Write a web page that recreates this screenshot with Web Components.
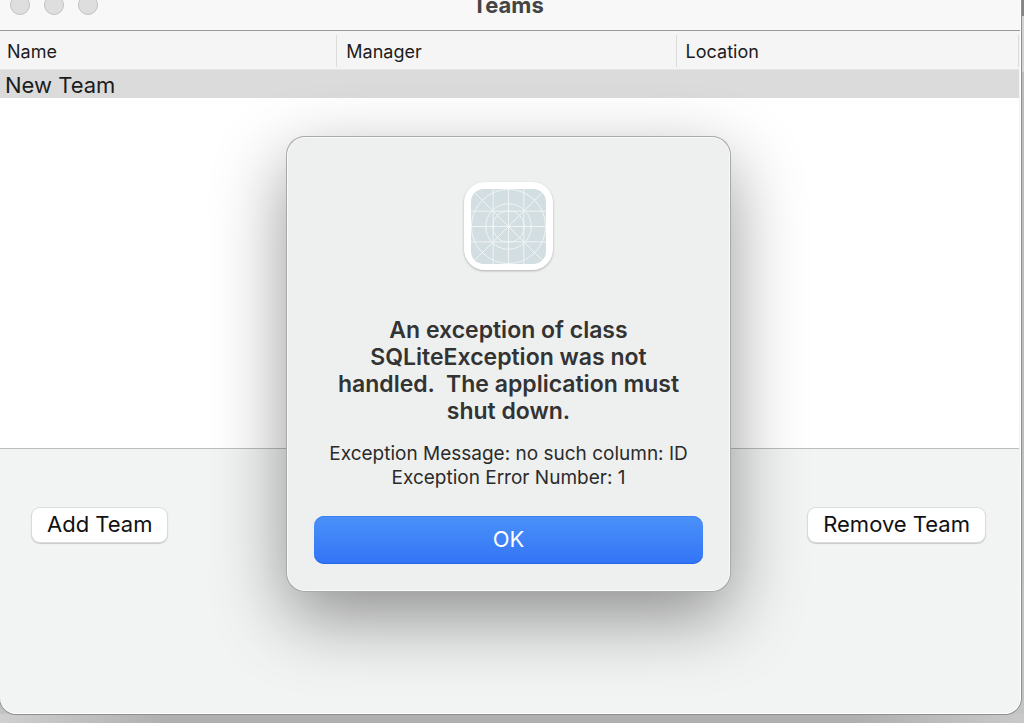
<!DOCTYPE html>
<html lang="en">
<head>
<meta charset="utf-8">
<title>Teams</title>
<style>
html, body { margin: 0; height: 100%; }
body { font-family: Inter, "Liberation Sans", sans-serif; color: #1c1c1c; overflow: hidden; }
</style>
</head>
<body>
<teams-desktop>
  <app-window heading="Teams">
    <team-table></team-table>
    <push-button slot="actions">Add Team</push-button>
    <push-button slot="actions">Remove Team</push-button>
    <alert-dialog slot="dialog">
      <app-icon slot="icon"></app-icon>
      <span slot="title">An exception of class
SQLiteException was not
handled.  The application must
shut down.</span>
      <span slot="message">Exception Message: no such column: ID
Exception Error Number: 1</span>
      <push-button slot="action" variant="primary">OK</push-button>
    </alert-dialog>
  </app-window>
</teams-desktop>
<script>
class BaseElement extends HTMLElement {
  constructor() {
    super();
    this.attachShadow({ mode: "open" }).innerHTML = this.constructor.markup;
  }
}

customElements.define("teams-desktop", class extends BaseElement {
  static markup = `
    <style>
      :host { display: block; box-sizing: border-box; height: 100vh; padding: 0 3px 9px 0;
        background: linear-gradient(90deg, #cfcfcf, #b1b0b0 16%, #b1b0b0 84%, #c9c9c9) bottom / 100% 9px no-repeat,
          linear-gradient(#858585 0 16px, #d2d2d2 16px 72px, #bcbcbc 72px 300px, #c4c4c4); }
    </style>
    <slot></slot>`;
});

customElements.define("app-window", class extends BaseElement {
  static markup = `
    <style>
      :host { display: flex; flex-direction: column; position: relative; box-sizing: border-box; height: 100%;
        background: #f2f4f3; border-right: 1px solid #fff; border-bottom: 1px solid #fff;
        border-radius: 0 0 16px 16px; box-shadow: 0 0 0 1px #8e8e8e; }
      header { height: 30px; display: flex; flex-direction: column; justify-content: flex-end;
        overflow: hidden; background: #f8f8f8; border-bottom: 1px solid #999; }
      .bar { flex: none; height: 50px; display: grid; grid-template-columns: 1fr auto 1fr; align-items: center; padding: 0 14px 0 10px; }
      .lights { display: flex; gap: 14px; }
      .lights i { box-sizing: border-box; width: 20px; height: 20px; border-radius: 50%; background: #dedede; border: 1px solid #c2c2c2; }
      h1 { margin: 0; font-size: 22px; line-height: 28px; font-weight: 700; color: #444; }
      .actions { display: flex; justify-content: space-between; padding: 59px 35px 0 32px; }
      .overlay { position: absolute; top: 137px; left: 0; right: 3px; display: flex; justify-content: center; }
    </style>
    <header><div class="bar"><div class="lights"><i></i><i></i><i></i></div><h1></h1></div></header>
    <slot></slot>
    <div class="actions"><slot name="actions"></slot></div>
    <div class="overlay"><slot name="dialog"></slot></div>`;
  connectedCallback() {
    this.shadowRoot.querySelector("h1").textContent = this.getAttribute("heading");
  }
});

customElements.define("team-table", class extends BaseElement {
  static markup = `
    <style>
      :host { display: block; height: 417px; margin-right: 1px; background: #fff; border-bottom: 1px solid #bcbcbc; }
      table { width: 100%; table-layout: fixed; border-collapse: collapse; }
      thead { background: #f5f5f5; }
      th { height: 38px; padding: 0; text-align: left; font-weight: 400; font-size: 18px; line-height: 24px; color: #1c1c1c; border-bottom: 1px solid #e6e6e6; }
      th:nth-child(1) { width: 33.1%; }
      th:nth-child(2) { width: 33.3%; }
      th span { display: block; margin: 4px 0 2px; padding: 5px 8px 3px 7px; border-right: 1px solid #dcdcdc; }
      th + th span { padding-left: 9px; }
      td { height: 26px; padding: 2px 5px 0; font-size: 22px; line-height: 26px; background: #dbdbdb; }
    </style>
    <table>
      <thead><tr><th scope="col"><span>Name</span></th><th scope="col"><span>Manager</span></th><th scope="col"><span>Location</span></th></tr></thead>
      <tbody><tr><td>New Team</td><td></td><td></td></tr></tbody>
    </table>`;
});

customElements.define("push-button", class extends BaseElement {
  static markup = `
    <style>
      :host { display: block; }
      button { display: block; width: 100%; height: 34px; margin: 0; padding: 0 15px 2px; border: 0; border-radius: 8px;
        background: #fff; color: #111; font: inherit; font-size: 22px; line-height: 32px;
        box-shadow: 0 0 0 1px #dadcdb, 0 1px 1px 1px #c8cac9; }
      :host([variant="primary"]) button { height: 48px; line-height: 46px; border-radius: 10px; color: #fff;
        background: linear-gradient(#4b91f8, #3274f6);
        box-shadow: inset 0 1px #3d80f0, inset 0 -1px #2466ec; }
    </style>
    <button type="button"><slot></slot></button>`;
});

customElements.define("app-icon", class extends BaseElement {
  static markup = `
    <style>
      :host { display: block; width: 89px; height: 89px; }
      svg { display: block; overflow: visible; filter: drop-shadow(0 1px 1px #0004); }
    </style>
    <svg width="89" height="89" viewBox="0 0 90 90" aria-hidden="true">
      <defs><clipPath id="face"><rect x="7" y="7" width="76" height="76" rx="13"/></clipPath></defs>
      <rect width="90" height="89" rx="21" fill="#fff"/>
      <g clip-path="url(#face)">
        <rect x="7" y="7" width="76" height="76" fill="#d3dee2"/>
        <g fill="none" stroke="#f0f4f5" stroke-width="1">
          <path d="M7 7 83 83M83 7 7 83M45 7v76M29.500 7v76M60.500 7v76M7 45h76M7 29.500h76M7 60.500h76"/>
          <circle cx="45" cy="45" r="37.500"/><circle cx="45" cy="45" r="23"/><circle cx="45" cy="45" r="16"/>
        </g>
      </g>
    </svg>`;
});

customElements.define("alert-dialog", class extends BaseElement {
  static markup = `
    <style>
      :host { display: block; width: 443px; }
      section { box-sizing: border-box; display: flex; flex-direction: column; align-items: center;
        padding: 44px 26px 26px; background: #eef0ef; border: 1px solid #fafafa; border-radius: 18px; text-align: center;
        box-shadow: 0 0 0 1px #a8a8a8, 0 26px 72px rgb(0 0 0 / 42%); }
      h2, p { margin: 0; white-space: pre; }
      h2 { margin-top: 46px; font-size: 23px; line-height: 27px; font-weight: 600; color: #333; }
      p { margin-top: 17px; font-size: 19px; line-height: 24px; color: #2b2b2b; }
      .action { align-self: stretch; margin-top: 26px; }
    </style>
    <section role="alertdialog" aria-modal="true" aria-labelledby="title" aria-describedby="message">
      <slot name="icon"></slot>
      <h2 id="title"><slot name="title"></slot></h2>
      <p id="message"><slot name="message"></slot></p>
      <div class="action"><slot name="action"></slot></div>
    </section>`;
});
</script>
</body>
</html>
